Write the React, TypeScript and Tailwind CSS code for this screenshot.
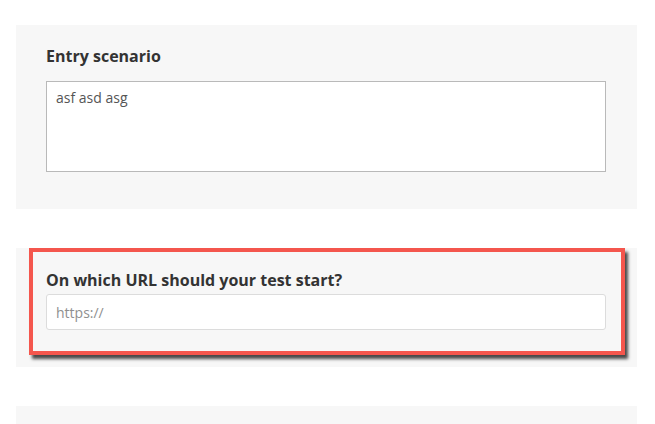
import React from "react";

export default function App() {
  return (
    <div
      className="w-[655px] h-[424px] overflow-hidden bg-white"
      style={{ fontFamily: '"Open Sans", "Liberation Sans", sans-serif' }}
    >
      <div className="pt-[25px] pl-[16px] pr-[18px] flex flex-col gap-[39px]">
        <section className="h-[184px] bg-[#f7f7f7] pt-[21px] px-[30px]">
          <h2 className="text-[16px] leading-[20px] font-bold text-[#333333]">Entry scenario</h2>
          <textarea
            className="mt-[15px] block w-[560px] h-[91px] border border-[#b9b9b9] bg-white pl-[9px] pt-[6px] text-[14px] leading-[20px] text-[#555555] resize-none outline-none"
            defaultValue="asf asd asg"
          />
        </section>
        <section className="h-[119px] bg-[#f7f7f7] pl-[13px]">
          <div className="w-[596px] h-[107px] border-4 border-[#f4564d] shadow-[3px_4px_3px_rgba(0,0,0,0.7)] pt-[18px] pl-[13px]">
            <h2 className="text-[16px] leading-[20px] font-bold text-[#333333]">
              On which URL should your test start?
            </h2>
            <input
              className="mt-[4px] block w-[560px] h-[36px] border border-[#dcdcdc] rounded-[3px] bg-white pl-[9px] text-[14px] leading-[20px] text-[#555555] placeholder:text-[#8f8f8f] outline-none"
              placeholder="https://"
            />
          </div>
        </section>
        <section className="h-[60px] bg-[#f7f7f7]" />
      </div>
    </div>
  );
}
